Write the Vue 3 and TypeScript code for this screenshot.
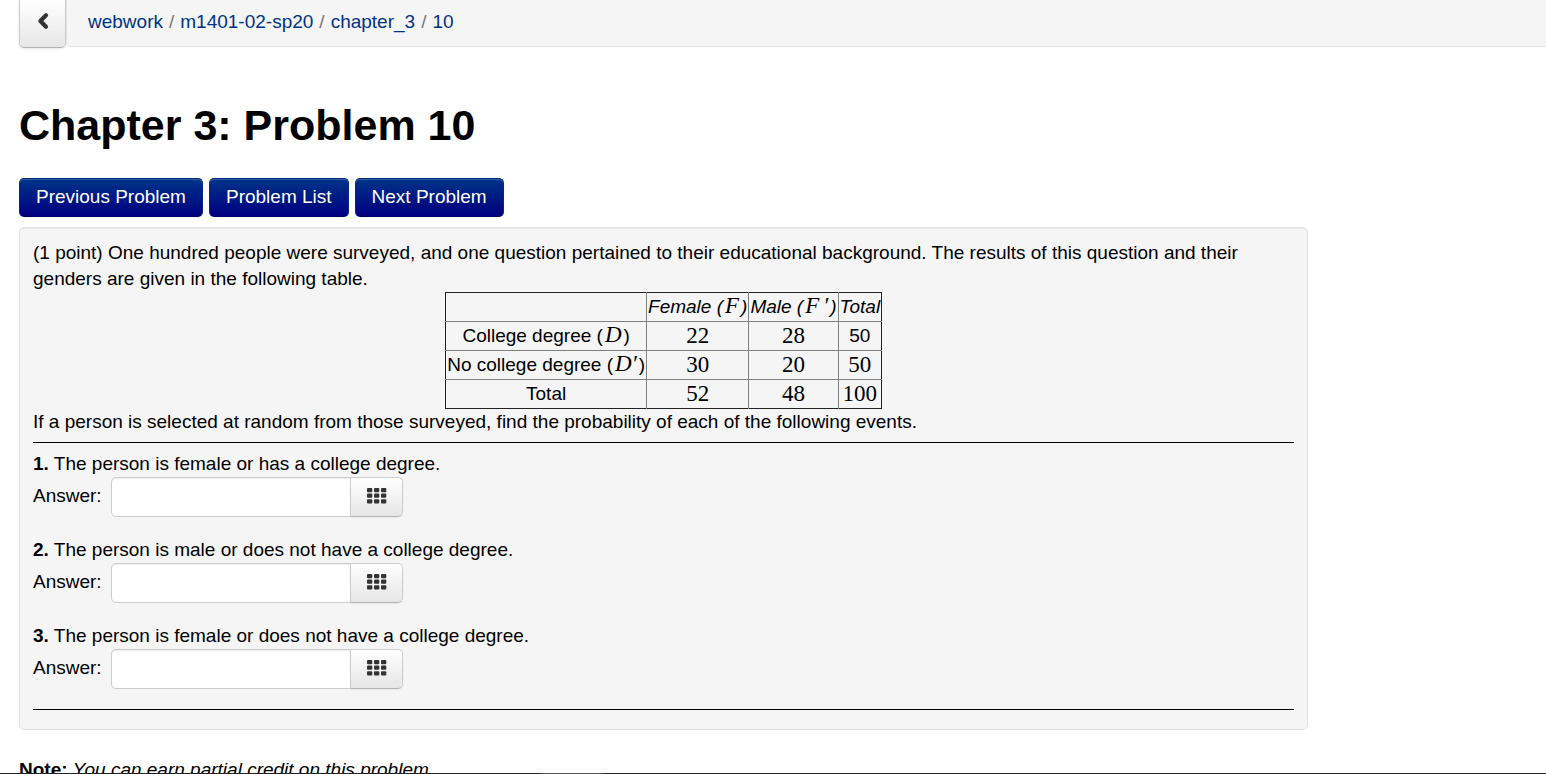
<script setup lang="ts">
import { ref } from 'vue'

interface Crumb {
  label: string
}

interface Question {
  id: number
  text: string
}

const crumbs: Crumb[] = [
  { label: 'webwork' },
  { label: 'm1401-02-sp20' },
  { label: 'chapter_3' },
  { label: '10' },
]

const navigation: string[] = ['Previous Problem', 'Problem List', 'Next Problem']

const questions: Question[] = [
  { id: 1, text: 'The person is female or has a college degree.' },
  { id: 2, text: 'The person is male or does not have a college degree.' },
  { id: 3, text: 'The person is female or does not have a college degree.' },
]

const answers = ref<string[]>(['', '', ''])
const dots: number[] = [0, 1, 2]
</script>

<template>
  <div class="page">
    <header class="topbar">
      <button class="back" type="button" aria-label="Back">
        <svg width="12" height="18" viewBox="0 0 12 18" aria-hidden="true">
          <path
            d="M9 3.2 L3.4 9 L9 14.8"
            fill="none"
            stroke="#333"
            stroke-width="4.2"
            stroke-linecap="round"
            stroke-linejoin="round"
          />
        </svg>
      </button>
      <nav class="crumbs" aria-label="Breadcrumb">
        <template v-for="(crumb, i) in crumbs" :key="crumb.label">
          <span v-if="i > 0" class="slash">/</span>
          <a href="#">{{ crumb.label }}</a>
        </template>
      </nav>
    </header>

    <main class="content">
      <h1>Chapter 3: Problem 10</h1>

      <nav class="actions" aria-label="Problem navigation">
        <a v-for="item in navigation" :key="item" href="#" class="action">{{ item }}</a>
      </nav>

      <section class="problem">
        <p>
          (1 point) One hundred people were surveyed, and one question pertained to their
          educational background. The results of this question and their genders are given in the
          following table.
        </p>

        <table>
          <thead>
            <tr>
              <td></td>
              <th scope="col">Female (<span class="var">F</span>)</th>
              <th scope="col">Male (<span class="var">F<span class="wide">′</span></span>)</th>
              <th scope="col">Total</th>
            </tr>
          </thead>
          <tbody>
            <tr>
              <td>College degree (<span class="var">D</span>)</td>
              <td class="num">22</td>
              <td class="num">28</td>
              <td>50</td>
            </tr>
            <tr>
              <td>No college degree (<span class="var">D′</span>)</td>
              <td class="num">30</td>
              <td class="num">20</td>
              <td class="num">50</td>
            </tr>
            <tr>
              <td>Total</td>
              <td class="num">52</td>
              <td class="num">48</td>
              <td class="num">100</td>
            </tr>
          </tbody>
        </table>

        <p>
          If a person is selected at random from those surveyed, find the probability of each of the
          following events.
        </p>
        <hr class="rule-top" />

        <div v-for="(question, i) in questions" :key="question.id" class="question">
          <p><b>{{ question.id }}.</b> {{ question.text }}</p>
          <div class="answer">
            <label :for="`answer-${question.id}`">Answer:</label>
            <input :id="`answer-${question.id}`" v-model="answers[i]" type="text" />
            <button type="button" class="keypad" aria-label="Equation editor">
              <svg width="20" height="16" viewBox="0 0 20 16" fill="#333" aria-hidden="true">
                <template v-for="row in dots" :key="row">
                  <rect
                    v-for="col in dots"
                    :key="col"
                    :x="col * 7"
                    :y="row * 5.6"
                    width="5.3"
                    height="4.2"
                    rx="1"
                  />
                </template>
              </svg>
            </button>
          </div>
        </div>
        <hr class="rule-bottom" />
      </section>

      <p class="note"><b>Note:</b> <i>You can earn partial credit on this problem.</i></p>
    </main>
    <div class="edge"></div>
  </div>
</template>

<style>
body {
  margin: 0;
  background: #fff;
}
</style>

<style scoped>
.page {
  position: relative;
  box-sizing: border-box;
  height: 100vh;
  overflow: hidden;
  font-family: "Liberation Sans", Arial, sans-serif;
  font-size: 19px;
  line-height: 26px;
  color: #000;
}

p {
  margin: 0;
}

a {
  color: #038;
  text-decoration: none;
}

.topbar {
  display: flex;
  align-items: flex-start;
  padding-left: 19px;
}

.back {
  display: flex;
  align-items: center;
  justify-content: center;
  box-sizing: border-box;
  width: 47px;
  height: 48px;
  padding: 0 0 6px;
  border: 1px solid #ccc;
  border-top: 0;
  border-bottom-color: #b3b3b3;
  border-radius: 0 0 5px 5px;
  background: linear-gradient(#fff, #e6e6e6);
  box-shadow: 0 1px 3px rgba(0, 0, 0, 0.1);
}

.crumbs {
  display: flex;
  flex: 1;
  gap: 6px;
  box-sizing: border-box;
  height: 47px;
  padding: 9px 21px;
  border: 1px solid #e3e3e3;
  border-top: 0;
  border-right: 0;
  border-radius: 0 0 0 5px;
  background: #f5f5f5;
}

.slash {
  color: #777;
}

.content {
  padding: 0 19px;
}

h1 {
  margin: 51px 0 26px;
  font-size: 43px;
  line-height: 53px;
}

.actions {
  display: flex;
  gap: 6px;
}

.action {
  box-sizing: border-box;
  height: 39px;
  padding: 5px 16px;
  border: 1px solid #002b80;
  border-bottom-color: #000066;
  border-radius: 5px;
  background: linear-gradient(#003388, #000080);
  box-shadow: inset 0 1px 0 rgba(255, 255, 255, 0.2), 0 1px 2px rgba(0, 0, 0, 0.05);
  color: #fff;
}

.problem {
  box-sizing: border-box;
  width: 85.5%;
  margin-top: 10px;
  padding: 12px 13px 19px;
  border: 1px solid #e3e3e3;
  border-radius: 5px;
  background: #f5f5f5;
  box-shadow: inset 0 1px 1px rgba(0, 0, 0, 0.05);
}

table {
  margin: 0 auto;
  border: 1px solid #222;
  border-collapse: collapse;
  text-align: center;
}

th,
td {
  height: 26px;
  padding: 1px;
  line-height: 26px;
  white-space: nowrap;
}

th,
td + td {
  border-left: 1px solid #808080;
}

tbody td {
  border-top: 1px solid #808080;
}

th {
  font-weight: normal;
  font-style: italic;
}

.num,
.var {
  font-family: "Liberation Serif", "Times New Roman", serif;
  font-size: 23px;
  line-height: 20px;
}

.var {
  padding: 0 2px;
  font-style: italic;
}

.wide {
  margin-left: 4px;
}

hr {
  height: 1px;
  border: 0;
  background: #000;
}

.rule-top {
  margin: 7px 0 8px;
}

.rule-bottom {
  margin: 0;
}

.question {
  padding-bottom: 20px;
}

.answer {
  display: flex;
}

.answer label {
  width: 78px;
  padding-top: 6px;
}

input {
  box-sizing: border-box;
  width: 240px;
  height: 40px;
  padding: 5px 8px;
  border: 1px solid #ccc;
  border-radius: 5px 0 0 5px;
  background: #fff;
  box-shadow: inset 0 1px 1px rgba(0, 0, 0, 0.075);
  font: inherit;
}

.keypad {
  display: flex;
  align-items: center;
  justify-content: center;
  box-sizing: border-box;
  width: 53px;
  height: 40px;
  margin-left: -1px;
  padding: 0 0 2px;
  border: 1px solid #ccc;
  border-bottom-color: #b3b3b3;
  border-radius: 0 5px 5px 0;
  background: linear-gradient(#fff, #e6e6e6);
  box-shadow: 0 1px 2px rgba(0, 0, 0, 0.05);
}

.note {
  margin-top: 27px;
}

.edge {
  position: absolute;
  right: 0;
  bottom: 0;
  left: 0;
  height: 1px;
  background: linear-gradient(90deg, #222 35%, #555 35%, #555 39%, #222 39%);
}
</style>
